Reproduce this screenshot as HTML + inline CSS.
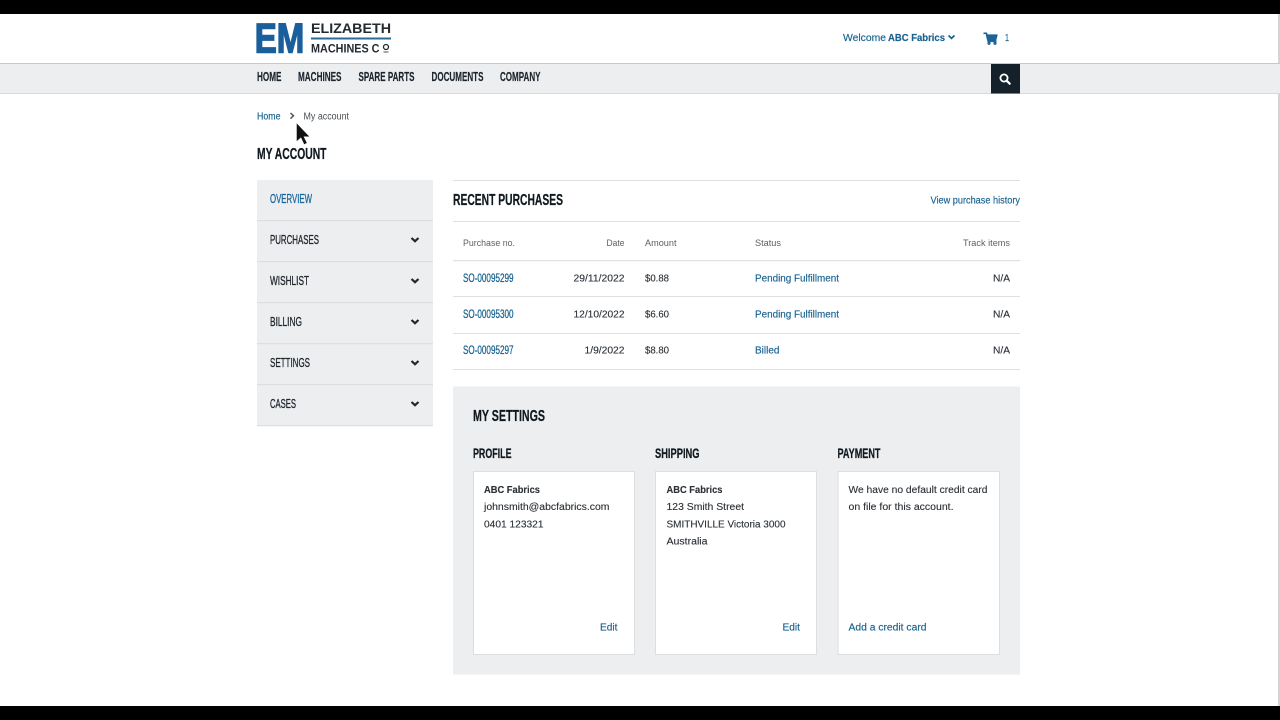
<!DOCTYPE html>
<html lang="en">
<head>
<meta charset="utf-8">
<title>My account</title>
<style>
html,body{margin:0;padding:0;background:#fff;width:1280px;height:720px;overflow:hidden}
svg{display:block;filter:blur(.3px)}
text{font-family:"Liberation Sans",sans-serif;white-space:pre}
.h{font-weight:700;fill:#10191f;stroke:#10191f;stroke-width:.25px}
.n{font-size:12.5px;font-weight:700;fill:#1a232b;stroke:#1a232b;stroke-width:.15px}
.s{font-size:12.5px;fill:#20272d;stroke:#20272d;stroke-width:.3px}
.b{font-size:10px;fill:#2a3036;stroke:#2a3036;stroke-width:.12px}
.g{font-size:9.5px;fill:#5c6166}
.l{font-size:10px;fill:#1a6390;stroke:#1a6390;stroke-width:.15px}
.lc{font-size:11.5px;fill:#1a6390;stroke:#1a6390;stroke-width:.25px}
</style>
</head>
<body>
<svg width="1280" height="720" viewBox="0 0 1280 720" xmlns="http://www.w3.org/2000/svg">
<rect width="1280" height="720" fill="#fff"/>
<rect width="1280" height="14" fill="#000"/>
<rect y="706" width="1280" height="14" fill="#000"/>
<rect x="1278" y="14" width="2" height="692" fill="#d4d4d4"/>

<!-- logo -->
<text x="254.800" y="52.500" font-size="42" font-weight="700" fill="#1a5f9c" stroke="#1a5f9c" stroke-width="1.500" textLength="49.500" lengthAdjust="spacingAndGlyphs">EM</text>
<text x="311" y="33" font-size="13.600" font-weight="700" fill="#232a30" textLength="80" lengthAdjust="spacingAndGlyphs">ELIZABETH</text>
<rect x="311" y="37.500" width="80" height="2" fill="#2a6c97"/>
<text x="311" y="52.700" font-size="12.300" font-weight="700" fill="#232a30" textLength="68.500" lengthAdjust="spacingAndGlyphs">MACHINES C</text>
<circle cx="386" cy="47" r="2.500" fill="none" stroke="#232a30" stroke-width="1.300"/>
<rect x="383.500" y="51.500" width="5" height="1" fill="#4a5056"/>

<!-- header right -->
<text x="843" y="41" class="l" textLength="43" lengthAdjust="spacingAndGlyphs">Welcome</text>
<text x="888" y="41" class="l" style="font-weight:700" textLength="57" lengthAdjust="spacingAndGlyphs">ABC Fabrics</text>
<path d="M948.500 35.500l3 2.800 3-2.800" fill="none" stroke="#1a6390" stroke-width="1.800"/>
<path d="M983.500 33.300h3l1.700 8h8.300" fill="none" stroke="#1a6496" stroke-width="1.600" stroke-linejoin="round"/>
<path d="M986.500 35h10.500l-1.300 5h-8z" fill="#1a6496" stroke="#1a6496" stroke-width="1.300" stroke-linejoin="round"/>
<circle cx="989" cy="43.300" r="1.600" fill="#1a6496"/><circle cx="995" cy="43.300" r="1.600" fill="#1a6496"/>
<text x="1005" y="41" class="l" textLength="4" lengthAdjust="spacingAndGlyphs">1</text>

<!-- nav -->
<rect y="63" width="1280" height="31" fill="#eceef0"/>
<rect y="63" width="1280" height="1" fill="#c6c8ca"/>
<rect y="93" width="1280" height="1" fill="#d9dadb"/>
<text x="257" y="81" class="n" textLength="24.500" lengthAdjust="spacingAndGlyphs">HOME</text>
<text x="298" y="81" class="n" textLength="43.500" lengthAdjust="spacingAndGlyphs">MACHINES</text>
<text x="358.500" y="81" class="n" textLength="56" lengthAdjust="spacingAndGlyphs">SPARE PARTS</text>
<text x="431.500" y="81" class="n" textLength="52" lengthAdjust="spacingAndGlyphs">DOCUMENTS</text>
<text x="500" y="81" class="n" textLength="40.500" lengthAdjust="spacingAndGlyphs">COMPANY</text>
<rect x="991" y="64" width="29" height="29.500" fill="#14202a"/>
<circle cx="1004" cy="78" r="3.600" fill="none" stroke="#fff" stroke-width="1.800"/>
<path d="M1006.700 80.700l3 3" stroke="#fff" stroke-width="2.200" stroke-linecap="round"/>

<!-- breadcrumb -->
<text x="257" y="119.500" class="l" textLength="23.500" lengthAdjust="spacingAndGlyphs">Home</text>
<path d="M290.500 113l3 2.800-3 2.800" fill="none" stroke="#555" stroke-width="1.500"/>
<text x="303.500" y="119.500" class="b" style="fill:#4a4f54;stroke:none" textLength="45.500" lengthAdjust="spacingAndGlyphs">My account</text>
<path d="M296.500 123v18.500l4.400-3.800 3.200 6.800 3-1.400-3.200-6.400h5.800z" fill="#111" stroke="#eee" stroke-width=".5"/>

<text x="257" y="159" class="h" font-size="15.500" textLength="69.500" lengthAdjust="spacingAndGlyphs">MY ACCOUNT</text>

<!-- sidebar -->
<rect x="257" y="180" width="176" height="246" fill="#eceef0"/>
<g fill="#dcdee0">
<rect x="257" y="220" width="176" height="1.200"/>
<rect x="257" y="261" width="176" height="1.200"/>
<rect x="257" y="302" width="176" height="1.200"/>
<rect x="257" y="343" width="176" height="1.200"/>
<rect x="257" y="384" width="176" height="1.200"/>
<rect x="257" y="425" width="176" height="1.200"/>
</g>
<text x="270" y="203.200" class="s" style="fill:#1a669c;stroke:#1a669c" textLength="42" lengthAdjust="spacingAndGlyphs">OVERVIEW</text>
<text x="270" y="244.200" class="s" textLength="49" lengthAdjust="spacingAndGlyphs">PURCHASES</text>
<text x="270" y="285.200" class="s" textLength="39" lengthAdjust="spacingAndGlyphs">WISHLIST</text>
<text x="270" y="326.200" class="s" textLength="32" lengthAdjust="spacingAndGlyphs">BILLING</text>
<text x="270" y="367.200" class="s" textLength="40" lengthAdjust="spacingAndGlyphs">SETTINGS</text>
<text x="270" y="408.200" class="s" textLength="26" lengthAdjust="spacingAndGlyphs">CASES</text>
<g fill="none" stroke="#22282e" stroke-width="2.200">
<path d="M411.500 238l3.500 3.200 3.500-3.200"/>
<path d="M411.500 279l3.500 3.200 3.500-3.200"/>
<path d="M411.500 320l3.500 3.200 3.500-3.200"/>
<path d="M411.500 361l3.500 3.200 3.500-3.200"/>
<path d="M411.500 402l3.500 3.200 3.500-3.200"/>
</g>

<!-- recent purchases -->
<g fill="#dfe0e2">
<rect x="453" y="180" width="567" height="1"/>
<rect x="453" y="221" width="567" height="1"/>
<rect x="453" y="260" width="567" height="1.200"/>
<rect x="453" y="296" width="567" height="1"/>
<rect x="453" y="333" width="567" height="1"/>
<rect x="453" y="369" width="567" height="1"/>
</g>
<text x="453" y="205" class="h" font-size="15.500" textLength="110" lengthAdjust="spacingAndGlyphs">RECENT PURCHASES</text>
<text x="930.500" y="203.500" class="l" textLength="89.500" lengthAdjust="spacingAndGlyphs">View purchase history</text>

<text x="463" y="246" class="g" textLength="52" lengthAdjust="spacingAndGlyphs">Purchase no.</text>
<text x="606.500" y="246" class="g" textLength="18" lengthAdjust="spacingAndGlyphs">Date</text>
<text x="645" y="246" class="g" textLength="31.500" lengthAdjust="spacingAndGlyphs">Amount</text>
<text x="755" y="246" class="g" textLength="26" lengthAdjust="spacingAndGlyphs">Status</text>
<text x="963" y="246" class="g" textLength="47" lengthAdjust="spacingAndGlyphs">Track items</text>

<text x="463" y="282" class="lc" textLength="50.500" lengthAdjust="spacingAndGlyphs">SO-00095299</text>
<text x="573.500" y="281.500" class="b" textLength="51" lengthAdjust="spacingAndGlyphs">29/11/2022</text>
<text x="645" y="281.500" class="b" textLength="24" lengthAdjust="spacingAndGlyphs">$0.88</text>
<text x="755" y="281.500" class="l" textLength="84" lengthAdjust="spacingAndGlyphs">Pending Fulfillment</text>
<text x="993" y="281.500" class="b" textLength="17" lengthAdjust="spacingAndGlyphs">N/A</text>

<text x="463" y="318" class="lc" textLength="50.500" lengthAdjust="spacingAndGlyphs">SO-00095300</text>
<text x="573.500" y="317.500" class="b" textLength="51" lengthAdjust="spacingAndGlyphs">12/10/2022</text>
<text x="645" y="317.500" class="b" textLength="24" lengthAdjust="spacingAndGlyphs">$6.60</text>
<text x="755" y="317.500" class="l" textLength="84" lengthAdjust="spacingAndGlyphs">Pending Fulfillment</text>
<text x="993" y="317.500" class="b" textLength="17" lengthAdjust="spacingAndGlyphs">N/A</text>

<text x="463" y="354" class="lc" textLength="50.500" lengthAdjust="spacingAndGlyphs">SO-00095297</text>
<text x="584.500" y="353.500" class="b" textLength="40" lengthAdjust="spacingAndGlyphs">1/9/2022</text>
<text x="645" y="353.500" class="b" textLength="24" lengthAdjust="spacingAndGlyphs">$8.80</text>
<text x="755" y="353.500" class="l" textLength="24.500" lengthAdjust="spacingAndGlyphs">Billed</text>
<text x="993" y="353.500" class="b" textLength="17" lengthAdjust="spacingAndGlyphs">N/A</text>

<!-- settings -->
<rect x="453" y="386.500" width="567" height="288" fill="#eceef0"/>
<text x="473" y="421" class="h" font-size="15.500" textLength="72" lengthAdjust="spacingAndGlyphs">MY SETTINGS</text>
<text x="473" y="458" class="h" font-size="13.500" textLength="38.500" lengthAdjust="spacingAndGlyphs">PROFILE</text>
<text x="655" y="458" class="h" font-size="13.500" textLength="44.500" lengthAdjust="spacingAndGlyphs">SHIPPING</text>
<text x="837.500" y="458" class="h" font-size="13.500" textLength="43" lengthAdjust="spacingAndGlyphs">PAYMENT</text>

<g fill="#fff" stroke="#dcdee0">
<rect x="473.500" y="471.500" width="161" height="183"/>
<rect x="655.500" y="471.500" width="161" height="183"/>
<rect x="838" y="471.500" width="161.500" height="183"/>
</g>

<text x="484" y="493" class="b" style="font-weight:700" textLength="56" lengthAdjust="spacingAndGlyphs">ABC Fabrics</text>
<text x="484" y="510" class="b" textLength="125.500" lengthAdjust="spacingAndGlyphs">johnsmith@abcfabrics.com</text>
<text x="484" y="527.500" class="b" textLength="59.500" lengthAdjust="spacingAndGlyphs">0401 123321</text>
<text x="600" y="630.500" class="l" textLength="17.500" lengthAdjust="spacingAndGlyphs">Edit</text>

<text x="666.500" y="493" class="b" style="font-weight:700" textLength="56" lengthAdjust="spacingAndGlyphs">ABC Fabrics</text>
<text x="666.500" y="510" class="b" textLength="77.500" lengthAdjust="spacingAndGlyphs">123 Smith Street</text>
<text x="666.500" y="527.500" class="b" textLength="119" lengthAdjust="spacingAndGlyphs">SMITHVILLE Victoria 3000</text>
<text x="666.500" y="544.500" class="b" textLength="41" lengthAdjust="spacingAndGlyphs">Australia</text>
<text x="782.500" y="630.500" class="l" textLength="17.500" lengthAdjust="spacingAndGlyphs">Edit</text>

<text x="848.500" y="493" class="b" textLength="139" lengthAdjust="spacingAndGlyphs">We have no default credit card</text>
<text x="848.500" y="510" class="b" textLength="105" lengthAdjust="spacingAndGlyphs">on file for this account.</text>
<text x="848.500" y="630.500" class="l" textLength="78" lengthAdjust="spacingAndGlyphs">Add a credit card</text>
</svg>
</body>
</html>
